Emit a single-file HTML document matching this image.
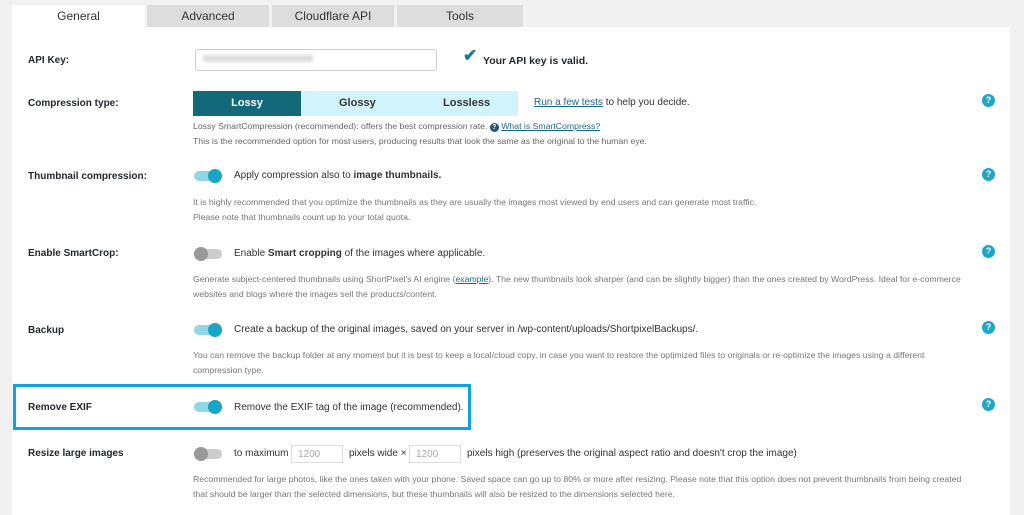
<html><head><style>
body{margin:0;width:1024px;height:515px;background:#f1f1f1;font-family:"Liberation Sans",sans-serif;position:relative;overflow:hidden;color:#23282d}
.a{position:absolute;white-space:nowrap}
.panel{position:absolute;left:12px;top:27px;width:998px;height:488px;background:#fff}
.tab{position:absolute;top:5px;height:22px;background:#ddd;font-size:12px;color:#333;text-align:center;line-height:22px}
.lbl{font-size:10px;font-weight:bold;color:#23282d}
.t{font-size:10px;color:#333}
.s{font-size:8.7px;color:#777;line-height:15px}
.help{position:absolute;left:982px;width:13px;height:13px;border-radius:50%;background:#1ea6c9;color:#fff;font-size:9px;font-weight:bold;text-align:center;line-height:13px}
.tg{position:absolute;width:28px;height:10px;border-radius:5px}
.tg i{position:absolute;top:-2px;width:14px;height:14px;border-radius:50%}
.on{background:#8fd6e6}.on i{left:14px;background:#19a5c5}
.off{background:#ccc}.off i{left:0;background:#999}
.num{position:absolute;height:18px;width:52px;border:1px solid #ddd;font-size:10px;color:#aaa;line-height:18px;padding-left:6px;box-sizing:border-box}
</style></head><body>
<div class="tab" style="left:12px;width:133px;background:#fff;height:23px">General</div>
<div class="tab" style="left:147px;width:122px">Advanced</div>
<div class="tab" style="left:272px;width:122px">Cloudflare API</div>
<div class="tab" style="left:397px;width:126px">Tools</div>
<div class="panel"></div>
<div class="a lbl" style="left:28px;top:55px">API Key:</div>
<div class="a" style="left:195px;top:49px;width:240px;height:20px;border:1px solid #ccc;border-radius:3px;background:#fff"></div>
<div class="a" style="left:203px;top:55px;width:110px;height:7px;background:#ddd;filter:blur(1.5px)"></div>
<div class="a" style="left:463px;top:46px;color:#1a7a9a;font-size:17px;font-weight:bold">✔</div>
<div class="a lbl" style="left:483px;top:55px;font-size:10.5px">Your API key is valid.</div>
<div class="a lbl" style="left:28px;top:98px">Compression type:</div>
<div class="a" style="left:193px;top:91px;width:108px;height:25px;background:#12697a;color:#fff;font-size:11px;font-weight:bold;text-align:center;line-height:25px">Lossy</div>
<div class="a" style="left:301px;top:91px;width:217px;height:25px;background:#d1f3fb;font-size:11px;font-weight:bold;color:#333;line-height:25px"><span style="position:absolute;left:38px">Glossy</span><span style="position:absolute;left:142px">Lossless</span></div>
<div class="a t" style="left:534px;top:97px"><u style="color:#1a6b8a">Run a few tests</u> to help you decide.</div>
<div class="a s" style="left:193px;top:119px;color:#666">Lossy SmartCompression (recommended): offers the best compression rate. <b style="display:inline-block;width:9px;height:9px;border-radius:50%;background:#1b5a78;color:#fff;font-size:7px;text-align:center;line-height:9px">?</b> <u style="color:#1a6b8a">What is SmartCompress?</u><br>This is the recommended option for most users, producing results that look the same as the original to the human eye.</div>
<div class="help" style="top:94px">?</div>
<div class="a lbl" style="left:28px;top:171px">Thumbnail compression:</div>
<div class="tg on" style="left:194px;top:171px"><i></i></div>
<div class="a t" style="left:234px;top:170px">Apply compression also to <b>image thumbnails.</b></div>
<div class="a s" style="left:193px;top:195px">It is highly recommended that you optimize the thumbnails as they are usually the images most viewed by end users and can generate most traffic.<br>Please note that thumbnails count up to your total quota.</div>
<div class="help" style="top:168px">?</div>
<div class="a lbl" style="left:28px;top:248px">Enable SmartCrop:</div>
<div class="tg off" style="left:194px;top:249px"><i></i></div>
<div class="a t" style="left:234px;top:248px">Enable <b>Smart cropping</b> of the images where applicable.</div>
<div class="a s" style="left:193px;top:272px">Generate subject-centered thumbnails using ShortPixel's AI engine (<u style="color:#1a6b8a">example</u>). The new thumbnails look sharper (and can be slightly bigger) than the ones created by WordPress. Ideal for e-commerce<br>websites and blogs where the images sell the products/content.</div>
<div class="help" style="top:245px">?</div>
<div class="a lbl" style="left:28px;top:325px">Backup</div>
<div class="tg on" style="left:194px;top:325px"><i></i></div>
<div class="a t" style="left:234px;top:324px">Create a backup of the original images, saved on your server in /wp-content/uploads/ShortpixelBackups/.</div>
<div class="a s" style="left:193px;top:348px">You can remove the backup folder at any moment but it is best to keep a local/cloud copy, in case you want to restore the optimized files to originals or re-optimize the images using a different<br>compression type.</div>
<div class="help" style="top:321px">?</div>
<div class="a" style="left:13px;top:384px;width:452px;height:40px;border:3px solid #11a3e0"></div>
<div class="a lbl" style="left:28px;top:402px">Remove EXIF</div>
<div class="tg on" style="left:194px;top:402px"><i></i></div>
<div class="a t" style="left:234px;top:402px">Remove the EXIF tag of the image (recommended).</div>
<div class="help" style="top:398px">?</div>
<div class="a lbl" style="left:28px;top:448px">Resize large images</div>
<div class="tg off" style="left:194px;top:449px"><i></i></div>
<div class="a t" style="left:234px;top:448px">to maximum</div>
<div class="num" style="left:291px;top:445px">1200</div>
<div class="a t" style="left:349px;top:448px">pixels wide ×</div>
<div class="num" style="left:409px;top:445px">1200</div>
<div class="a t" style="left:467px;top:448px">pixels high (preserves the original aspect ratio and doesn't crop the image)</div>
<div class="a s" style="left:193px;top:472px">Recommended for large photos, like the ones taken with your phone. Saved space can go up to 80% or more after resizing. Please note that this option does not prevent thumbnails from being created<br>that should be larger than the selected dimensions, but these thumbnails will also be resized to the dimensions selected here.</div>
</body></html>
